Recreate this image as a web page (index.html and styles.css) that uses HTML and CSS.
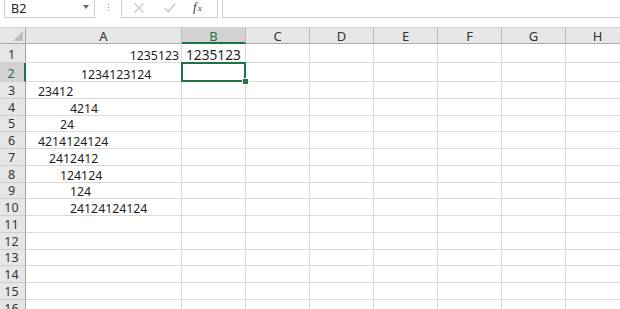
FILE: index.html
```html
<!DOCTYPE html>
<html lang="zh">
<head>
    <meta charset="UTF-8">
    <meta name="viewport" content="width=device-width, initial-scale=1.0">
    <title>Hoja1</title>
    <link rel="stylesheet" href="styles.css">
</head>
<body>
    <div class="toolbar">
        <div class="namebox">
            <span class="ref">B2</span>
            <span class="arrow"></span>
        </div>
        <div class="dots">
            <span></span><span></span><span></span>
        </div>
        <div class="fbuttons">
            <svg class="btn" width="12" height="10" viewBox="0 0 12 10">
                <path d="M1.5 0.5 L10.5 9.5 M10.5 0.5 L1.5 9.5" stroke="#c4c4c4" stroke-width="1.2" fill="none"/>
            </svg>
            <svg class="btn" width="12" height="10" viewBox="0 0 12 10">
                <path d="M1 5.2 L4.3 8.8 L11 0.8" stroke="#c4c4c4" stroke-width="1.4" fill="none"/>
            </svg>
            <span class="fx"><i>f</i><i class="sub">x</i></span>
        </div>
        <div class="finput"></div>
    </div>

    <div class="sheet" id="sheet"></div>

    <script>
        const cols = ["A", "B", "C", "D", "E", "F", "G", "H"];
        const totalRows = 16;

        // contenido de las celdas: [texto, clase]
        const cells = {
            A1: ["1235123", "right"],
            B1: ["1235123", "big"],
            A2: ["1234123124", "ind5"],
            A3: ["23412", "ind1"],
            A4: ["4214", "ind4"],
            A5: ["24", "ind3"],
            A6: ["4214124124", "ind1"],
            A7: ["2412412", "ind2"],
            A8: ["124124", "ind3"],
            A9: ["124", "ind4"],
            A10: ["24124124124", "ind4"]
        };
        const activeCol = "B";
        const activeRow = 2;

        const sheet = document.getElementById("sheet");

        function addDiv(cls, text) {
            const div = document.createElement("div");
            div.className = cls;
            if (text) div.textContent = text;
            sheet.appendChild(div);
            return div;
        }

        // esquina y cabeceras de columna
        addDiv("corner").appendChild(document.createElement("span"));
        for (const c of cols) {
            addDiv(c === activeCol ? "colhead sel" : "colhead", c);
        }

        // filas
        for (let r = 1; r <= totalRows; r++) {
            addDiv(r === activeRow ? "rowhead sel" : "rowhead", String(r));
            for (const c of cols) {
                let cls = "cell";
                if (c === activeCol && r === activeRow) cls += " active";
                const data = cells[c + r];
                if (data) cls += " " + data[1];
                addDiv(cls, data ? data[0] : "");
            }
        }
    </script>
</body>
</html>
```

FILE: styles.css
```css
html, body {
    margin: 0;
    padding: 0;
    overflow: hidden;
    background-color: #ffffff;
}
body {
    width: 620px;
    height: 309px;
    font-family: "Noto Sans", "Liberation Sans", sans-serif;
    color: #1e1e1e;
}

/* barra de fórmulas */
.toolbar {
    display: flex;
    height: 18px;
}
.namebox {
    width: 91px;
    margin-left: 4px;
    box-sizing: border-box;
    border: 1px solid #cfcfcf;
    border-top: none;
    display: flex;
    align-items: center;
    justify-content: space-between;
    padding: 0 5px 0 6px;
}
.ref {
    font-size: 12.5px;
    line-height: 14px;
    color: #222;
}
.arrow {
    width: 0;
    height: 0;
    border-left: 3.5px solid transparent;
    border-right: 3.5px solid transparent;
    border-top: 4px solid #666;
    margin-top: -3px;
}
.dots {
    width: 26px;
    display: flex;
    flex-direction: column;
    align-items: center;
    justify-content: center;
    gap: 2px;
    padding-bottom: 3px;
    box-sizing: border-box;
}
.dots span {
    width: 1px;
    height: 1px;
    background-color: #9a9a9a;
}
.fbuttons {
    width: 97px;
    box-sizing: border-box;
    border: 1px solid #cfcfcf;
    border-top: none;
    display: flex;
    align-items: center;
    padding: 0 0 1px 11px;
}
.fbuttons .btn {
    margin-right: 19px;
}
.fx {
    font-family: "Liberation Serif", serif;
    font-size: 13px;
    color: #3c3c3c;
    margin-left: -2px;
    margin-top: -3px;
}
.fx .sub {
    font-size: 9px;
    margin-left: 1px;
}
.finput {
    flex: 1;
    margin-left: 4px;
    border-left: 1px solid #cfcfcf;
    border-bottom: 1px solid #cfcfcf;
}

/* hoja */
.sheet {
    margin-top: 9px;
    display: grid;
    grid-template-columns: 26px 156px repeat(7, 64px);
    grid-template-rows: 17px 19px 19px repeat(14, 16.75px);
    width: 630px;
}
.corner, .colhead, .rowhead, .cell {
    box-sizing: border-box;
}
.corner {
    background-color: #e6e6e6;
    border-top: 1px solid #d6d6d6;
    border-right: 1px solid #a6a6a6;
    border-bottom: 1px solid #ababab;
    position: relative;
}
.corner span {
    position: absolute;
    right: 2px;
    bottom: 2px;
    width: 0;
    height: 0;
    border-left: 10px solid transparent;
    border-bottom: 10px solid #bdbdbd;
}
.colhead {
    background-color: #e6e6e6;
    border-top: 1px solid #d6d6d6;
    border-right: 1px solid #bdbdbd;
    border-bottom: 1px solid #ababab;
    display: flex;
    justify-content: center;
    align-items: center;
    font-size: 13px;
    line-height: 14px;
    color: #333;
    padding-top: 1px;
}
.colhead.sel {
    background-color: #d2d2d2;
    color: #217346;
    border-bottom: 2px solid #217346;
    padding-top: 2px;
}
.rowhead {
    background-color: #e6e6e6;
    border-right: 1px solid #a6a6a6;
    border-bottom: 1px solid #d0d0d0;
    display: flex;
    justify-content: center;
    align-items: flex-end;
    font-size: 12.5px;
    line-height: 14px;
    color: #333;
    padding-right: 2px;
    padding-bottom: 0;
}
.rowhead.sel {
    background-color: #d2d2d2;
    color: #217346;
    border-right: 2px solid #217346;
}
.cell {
    border-right: 1px solid #dadada;
    border-bottom: 1px solid #dadada;
    display: flex;
    align-items: flex-end;
    font-size: 12.3px;
    line-height: 13px;
    white-space: nowrap;
    padding-left: 2px;
}
.cell.right {
    justify-content: flex-end;
    padding-right: 2px;
}
.cell.big {
    font-size: 13.7px;
    line-height: 15px;
    padding-left: 4px;
}
.ind1 { padding-left: 12px; }
.ind2 { padding-left: 23px; }
.ind3 { padding-left: 34px; }
.ind4 { padding-left: 44px; }
.ind5 { padding-left: 55px; }

/* celda activa */
.cell.active {
    position: relative;
}
.cell.active::before {
    content: "";
    position: absolute;
    left: -1px;
    top: -1px;
    right: -1px;
    bottom: -1px;
    border: 2px solid #217346;
    z-index: 2;
}
.cell.active::after {
    content: "";
    position: absolute;
    right: -4px;
    bottom: -4px;
    width: 5px;
    height: 5px;
    background-color: #217346;
    border: 1px solid #ffffff;
    z-index: 3;
}
```
